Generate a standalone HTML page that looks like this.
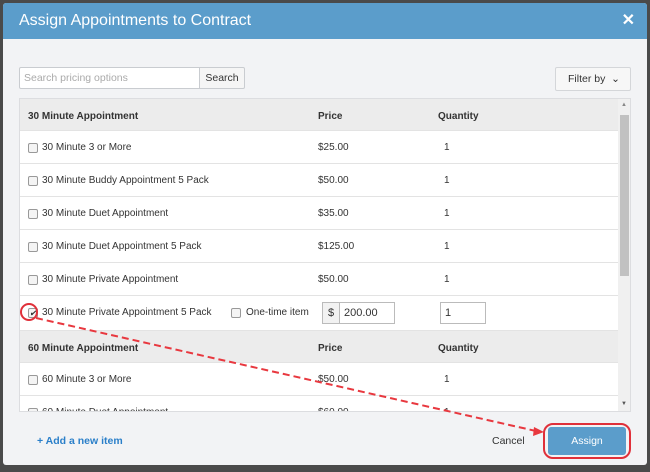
<!DOCTYPE html>
<html><head><style>
*{box-sizing:border-box;margin:0;padding:0}
body{width:650px;height:472px;background:#4a4a4a;font-family:"Liberation Sans",Arial,sans-serif;font-size:10px;color:#333;position:relative;overflow:hidden}
.dlg{position:absolute;left:3px;top:3px;width:644px;height:462px;background:#f2f3f5;border-radius:3px;overflow:hidden}
.hd{position:absolute;left:0;top:0;width:644px;height:36px;background:#5b9dcb;color:#fff;font-size:16px;line-height:36px;padding-left:16px}
.x{position:absolute;right:12px;top:0;font-size:16px;font-weight:bold}
.abs{position:absolute}
.srch{left:16px;top:64px;width:181px;height:22px;background:#fff;border:1px solid #c9ccd0;border-radius:2px 0 0 2px;color:#aaa;font-size:10.5px;line-height:20px;padding-left:4px}
.sbtn{left:196px;top:64px;width:46px;height:22px;background:#f5f5f5;border:1px solid #c9ccd0;border-radius:0 2px 2px 0;font-size:10.5px;line-height:20px;text-align:center}
.flt{left:552px;top:64px;width:76px;height:24px;background:#f7f7f7;border:1px solid #d4d6d9;border-radius:2px;font-size:10.5px;line-height:22px;padding-left:12px}
.tbl{left:16px;top:95px;width:612px;height:314px;background:#fff;border:1px solid #dcdde0;overflow:hidden}
.row{position:absolute;left:0;width:598px;height:33px;border-bottom:1px solid #e3e3e3;line-height:34px;font-size:10px}
.gh{background:#ececec;font-weight:bold;line-height:36px}
.row span{position:absolute}
.cb{position:absolute;left:8px;top:12px;width:10px;height:10px;border:1px solid #999;border-radius:2px;background:#f4f4f4}
.sb{position:absolute;left:598px;top:0;width:13px;height:314px;background:#f0f0f0}
.th{position:absolute;left:2px;top:16px;width:9px;height:161px;background:#c1c1c1}
.inp{position:absolute;background:#fff;border:1px solid #bbb;height:22px;line-height:20px;font-size:11px;padding-left:4px}
</style></head><body>
<div class="dlg">
<div class="hd">Assign Appointments to Contract<span class="x">✕</span></div>
<div class="abs srch">Search pricing options</div>
<div class="abs sbtn">Search</div>
<div class="abs flt">Filter by &nbsp;⌄</div>
<div class="abs tbl">
<div class="row gh" style="top:0;height:32px"><span style="left:8px">30 Minute Appointment</span><span style="left:298px">Price</span><span style="left:418px">Quantity</span></div>
<div class="row" style="top:32px"><i class="cb"></i><span style="left:22px">30 Minute 3 or More</span><span style="left:298px">$25.00</span><span style="left:424px">1</span></div>
<div class="row" style="top:65px"><i class="cb"></i><span style="left:22px">30 Minute Buddy Appointment 5 Pack</span><span style="left:298px">$50.00</span><span style="left:424px">1</span></div>
<div class="row" style="top:98px"><i class="cb"></i><span style="left:22px">30 Minute Duet Appointment</span><span style="left:298px">$35.00</span><span style="left:424px">1</span></div>
<div class="row" style="top:131px"><i class="cb"></i><span style="left:22px">30 Minute Duet Appointment 5 Pack</span><span style="left:298px">$125.00</span><span style="left:424px">1</span></div>
<div class="row" style="top:164px"><i class="cb"></i><span style="left:22px">30 Minute Private Appointment</span><span style="left:298px">$50.00</span><span style="left:424px">1</span></div>
<div class="row" style="top:197px;height:35px"><i class="cb" style="font-size:9px;line-height:8px;text-align:center">✔</i><span style="left:22px">30 Minute Private Appointment 5 Pack</span><i class="cb" style="left:211px"></i><span style="left:226px">One-time item</span>
<div class="inp" style="left:302px;top:6px;width:72px;background:#f2f2f2;padding:0"><span style="left:5px">$</span><div style="position:absolute;left:16px;top:-1px;width:56px;height:22px;background:#fff;border:1px solid #bbb;padding-left:4px">200.00</div></div>
<div class="inp" style="left:420px;top:6px;width:46px">1</div></div>
<div class="row gh" style="top:232px;height:32px"><span style="left:8px">60 Minute Appointment</span><span style="left:298px">Price</span><span style="left:418px">Quantity</span></div>
<div class="row" style="top:264px"><i class="cb"></i><span style="left:22px">60 Minute 3 or More</span><span style="left:298px">$50.00</span><span style="left:424px">1</span></div>
<div class="row" style="top:297px"><i class="cb"></i><span style="left:22px">60 Minute Duet Appointment</span><span style="left:298px">$60.00</span><span style="left:424px">1</span></div>
<div class="sb"><div class="th"></div><span style="position:absolute;left:3px;top:3px;font-size:6px;color:#888">▲</span><span style="position:absolute;left:3px;top:302px;font-size:6px;color:#555">▼</span></div>
</div>
<div class="abs" style="left:34px;top:432px;color:#2a7fc9;font-weight:bold;font-size:10.5px">+ Add a new item</div>
<div class="abs" style="left:489px;top:432px;font-size:10.5px">Cancel</div>
<div class="abs" style="left:540px;top:420px;width:88px;height:36px;border:2px solid #e0303a;border-radius:10px"></div>
<div class="abs" style="left:545px;top:424px;width:78px;height:28px;background:#5b9dcb;border-radius:3px;color:#fff;text-align:center;line-height:28px;font-size:10.5px">Assign</div>
<div class="abs" style="left:17px;top:300px;width:18px;height:18px;border:2px solid #e0303a;border-radius:50%"></div>
</div>
<svg class="abs" style="left:0;top:0" width="650" height="472"><line x1="36" y1="318" x2="536" y2="431" stroke="#e8383f" stroke-width="2" stroke-dasharray="7,4"/><polygon points="544,432 534,427 533,436" fill="#e8383f"/></svg>
</body></html>
